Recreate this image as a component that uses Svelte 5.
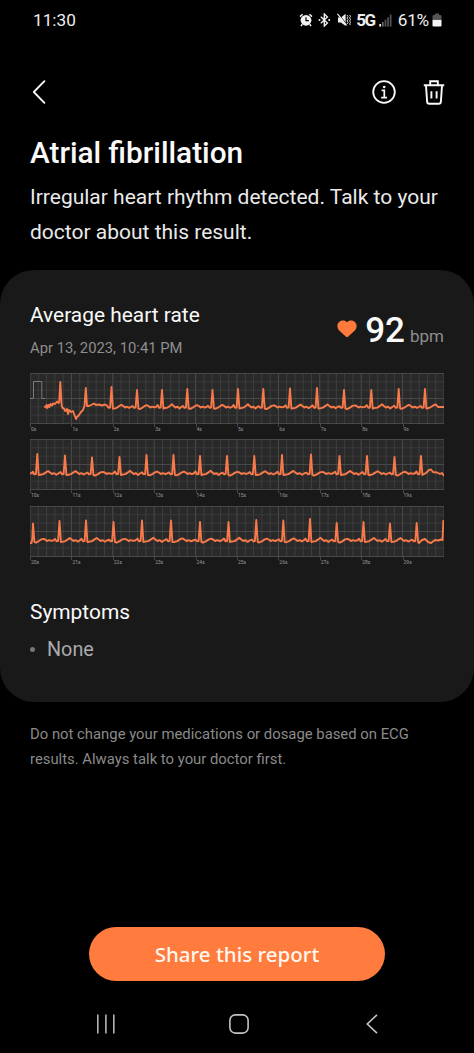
<script lang="ts">
  type Beat = [x: number, top: number];

  interface Strip {
    start: number;
    baseline: number;
    intro: string;
    beats: Beat[];
    tail: string;
  }

  const STRIP_WIDTH = 414;
  const STRIP_HEIGHT = 51;
  const SECOND = 41.4;

  const strips: Strip[] = [
    {
      start: 0,
      baseline: 34,
      intro: 'M14.5 33 L15.5 34.5 L16.5 32 L17.5 35 L18.5 32 L19.5 34 L20.5 31 L22 32.5 L23 30.5 L25 31 L27 28.5 L28.5 30 L29.2 29 L30.3 9 L31.6 32 L32.5 35 L34 35.5 L35 38 L37 36 L38 41 L39 37 L41 39 L43 38 L44.5 42 L46 46 L47 44 L49 42 L51 39 L53 37 L54.5 33 L55.8 15 L57 33 L59 33 L62 31.5 L64 30.5 L66 32 L69 31.5 L72 32.5 L75 31.5 L77 32.5',
      beats: [[81.5, 14], [107, 17], [132, 17], [157.3, 16], [182.5, 17], [208, 16], [233.3, 16], [260, 15.5], [287, 15], [314, 17], [341.3, 17], [368.7, 16], [395, 16]],
      tail: 'L399 35 L401 34 L404 32 L406 31.5 L408 34 L414 34'
    },
    {
      start: 10,
      baseline: 34.5,
      intro: 'M0 35 L2 33.5 L4 35',
      beats: [[7.3, 15], [35, 16.5], [62, 18.5], [89.5, 18], [116.5, 16], [143.5, 16], [170, 17], [197, 17], [224.3, 17], [252, 16], [281, 15.5], [309.5, 17], [337, 17], [364.5, 18], [391, 17]],
      tail: 'L396 34 L399 31 L401 30.5 L403 33 L407 33.5 L410 35 L412 34 L414 37'
    },
    {
      start: 20,
      baseline: 34.5,
      intro: 'M0 37 L1.5 37 L2.3 33',
      beats: [[3, 17.5], [29.5, 15], [56, 14.5], [83.5, 16], [112, 14.5], [141, 14.5], [170, 16], [198.5, 16], [226.3, 14], [253.3, 14.5], [280, 13], [306.7, 17], [333.5, 16], [360, 17.5], [386.7, 17]],
      tail: 'L389 37 L392 34 L395 33 L398 36 L401 37 L405 34 L408 34.5 L411 33.5 L412.5 34 L413.4 14'
    }
  ];

  // P wave, QRS spike and T wave for every beat; the offsets vary a little so the rhythm looks uneven
  function trace(strip: Strip): string {
    const base = strip.baseline;
    const parts = [strip.intro];
    strip.beats.forEach(([x, top], i) => {
      const wobble = Math.sin(i * 2.3 + strip.start) * 0.6;
      if (x > 6) {
        parts.push(`L${x - 4.5} ${base - 1.4 + wobble} L${x - 3} ${base + 0.8} L${x - 1.4} ${base + 0.6}`);
      }
      parts.push(`L${x} ${top} L${x + 1.4} ${base + 1.5}`);
      const next = strip.beats[i + 1];
      if (next) {
        const gap = next[0] - x;
        parts.push(
          `L${x + 3} ${base + 1.6 + wobble}`,
          `L${x + gap * 0.22} ${base + 0.6}`,
          `L${x + gap * 0.31} ${base - 1.1}`,
          `L${x + gap * 0.39} ${base - 2.2 + wobble}`,
          `L${x + gap * 0.46} ${base - 1}`,
          `L${x + gap * 0.53} ${base + 0.5}`,
          `L${x + gap * 0.61} ${base - 0.3}`,
          `L${x + gap * 0.69} ${base + 0.9 - wobble}`,
          `L${x + gap * 0.76} ${base}`
        );
      }
    });
    parts.push(strip.tail);
    return parts.join(' ');
  }

  const columns = Array.from({ length: 51 }, (_, i) => (i * SECOND) / 5);
  const rows = Array.from({ length: 7 }, (_, i) => 0.5 + i * 8.33);
  const seconds = Array.from({ length: 10 }, (_, i) => i);
</script>

<div class="screen">
  <header class="status-bar">
    <span class="clock">11:30</span>
    <div class="status-icons">
      <svg class="alarm" viewBox="0 0 14 14" width="14" height="14">
        <circle cx="7" cy="7.3" r="5.4" fill="#f2f2f2" />
        <path d="M1 3.6 3.6 1.2M13 3.6 10.4 1.2M3.3 11.2 2 13M10.7 11.2 12 13" stroke="#f2f2f2" stroke-width="1.5" fill="none" />
        <path d="M7 4.2V7.6H9.8" stroke="#000" stroke-width="1.2" fill="none" />
      </svg>
      <svg class="bluetooth" viewBox="0 0 13 14" width="13" height="14">
        <path d="M2.8 3.8 9.4 9.9 6.3 13V1L9.4 4.1 2.8 10.2" fill="none" stroke="#eee" stroke-width="1.4" />
        <circle cx="1.5" cy="7" r="1" fill="#eee" />
        <circle cx="11.2" cy="7" r="1" fill="#eee" />
      </svg>
      <svg class="mute" viewBox="0 0 14 14" width="14" height="14">
        <path d="M1 4.5H4L8.6 0.8V13L4 9.5H1Z" fill="#eee" />
        <path d="M1.3 0.9 10.3 12" stroke="#000" stroke-width="1" />
        <path d="M0.5 0.9 9.6 12.4" stroke="#eee" stroke-width="1.2" />
        <path d="M10 2 11 3.5 10 5 11 6.5 10 8 11 9.5 10 11M12.6 2 13.5 3.5 12.6 5 13.5 6.5 12.6 8 13.5 9.5 12.6 11 13.5 12" stroke="#ddd" stroke-width="1" fill="none" />
      </svg>
      <span class="network">5G</span>
      <svg class="signal" viewBox="0 0 13 13" width="13" height="13">
        <rect x="0.3" y="10" width="1.8" height="2.6" fill="#eee" />
        <rect x="3" y="8" width="1.7" height="4.6" fill="#666" />
        <rect x="5.6" y="5.6" width="1.7" height="7" fill="#555" />
        <rect x="8.2" y="3.2" width="1.7" height="9.4" fill="#555" />
        <rect x="10.8" y="0.6" width="1.7" height="12" fill="#555" />
      </svg>
      <span class="percent">61%</span>
      <svg class="battery" viewBox="0 0 10 14" width="10" height="14">
        <path d="M3 0.5H7V2H8.3Q9.5 2 9.5 3.2V6.5H0.5V3.2Q0.5 2 1.7 2H3Z" fill="#555" />
        <path d="M0.5 6.8H9.5V12.3Q9.5 13.5 8.3 13.5H1.7Q0.5 13.5 0.5 12.3Z" fill="#f5f5f5" />
      </svg>
    </div>
  </header>

  <nav class="toolbar">
    <button class="icon-button" aria-label="Back">
      <svg viewBox="0 0 14 24" width="14" height="24">
        <path d="M12.4 1.2 1.8 12 12.4 22.8" fill="none" stroke="#fafafa" stroke-width="1.8" stroke-linecap="round" stroke-linejoin="round" />
      </svg>
    </button>
    <div class="toolbar-actions">
      <button class="icon-button" aria-label="Information">
        <svg viewBox="0 0 24 24" width="24" height="24">
          <circle cx="12" cy="12" r="10.8" fill="none" stroke="#fafafa" stroke-width="1.8" />
          <circle cx="12.2" cy="7" r="1.3" fill="#fafafa" />
          <path d="M9.6 10.3H12.3V17.6M9.2 17.7H15" fill="none" stroke="#fafafa" stroke-width="1.7" />
        </svg>
      </button>
      <button class="icon-button" aria-label="Delete">
        <svg viewBox="0 0 22 25" width="22" height="25">
          <path d="M0.8 5.3H21.2M7.2 5V1.3H14.8V5M3 5.6 4.1 21.6Q4.2 23.7 6.3 23.7H15.7Q17.8 23.7 17.9 21.6L19 5.6M8.4 11.2V18.4M13.6 11.2V18.4" fill="none" stroke="#fafafa" stroke-width="1.9" />
        </svg>
      </button>
    </div>
  </nav>

  <section class="result">
    <h1>Atrial fibrillation</h1>
    <p>Irregular heart rhythm detected. Talk to your<br />doctor about this result.</p>
  </section>

  <main class="card">
    <div class="summary">
      <div>
        <h2>Average heart rate</h2>
        <time>Apr 13, 2023, 10:41 PM</time>
      </div>
      <div class="rate">
        <svg class="heart" viewBox="0 0 20 18" width="20" height="18">
          <path d="M10 17.2Q9.4 17.2 8.7 16.6L2.2 10.4C-0.4 7.5 0 3.7 2.2 2C4.8-0.2 8.2 0.2 10 2.2C11.8 0.2 15.2-0.2 17.8 2C20 3.7 20.4 7.5 17.8 10.4L11.3 16.6Q10.6 17.2 10 17.2Z" fill="#ff7a3c" />
        </svg>
        <span class="bpm-value">92</span>
        <span class="bpm-unit">bpm</span>
      </div>
    </div>

    <div class="strips">
      {#each strips as strip (strip.start)}
        <div class="strip">
          <svg viewBox="0 0 {STRIP_WIDTH} {STRIP_HEIGHT}" width={STRIP_WIDTH} height={STRIP_HEIGHT}>
            <rect width={STRIP_WIDTH} height={STRIP_HEIGHT} fill="#292929" />
            {#each columns as x, i}
              <line x1={x} x2={x} y1="0" y2={STRIP_HEIGHT} stroke={i % 5 === 0 ? '#505050' : '#414141'} stroke-width="0.9" />
            {/each}
            {#each rows as y, i}
              <line x1="0" x2={STRIP_WIDTH} y1={y} y2={y} stroke={i % 3 === 0 ? '#4c4c4c' : '#3c3c3c'} stroke-width="0.9" />
            {/each}
            {#if strip.start === 0}
              <path d="M0 25.5H3.5V8.5H11.8V25.5H15" fill="none" stroke="#7a7a7a" stroke-width="1" />
            {/if}
            <path d={trace(strip)} fill="none" stroke="#f87a4a" stroke-width="1.9" stroke-linejoin="round" />
          </svg>
          <div class="ticks">
            {#each seconds as s}
              <span>{strip.start + s}s</span>
            {/each}
          </div>
        </div>
      {/each}
    </div>

    <h2 class="symptoms-title">Symptoms</h2>
    <ul>
      <li>None</li>
    </ul>
  </main>

  <p class="disclaimer">
    Do not change your medications or dosage based on ECG<br />results. Always talk to your doctor first.
  </p>

  <footer>
    <button class="share">Share this report</button>
    <div class="nav-bar">
      <svg viewBox="0 0 20 20" width="20" height="20">
        <path d="M1.8 0.5V19.5M9.9 0.5V19.5M17.8 0.5V19.5" stroke="#b4b4b4" stroke-width="1.6" />
      </svg>
      <svg viewBox="0 0 20 20" width="20" height="20">
        <rect x="0.9" y="0.9" width="18.2" height="18.2" rx="5.4" fill="none" stroke="#c4c4c4" stroke-width="1.6" />
      </svg>
      <svg viewBox="0 0 20 20" width="20" height="20">
        <path d="M15 0.8 5.3 10 15 19.2" fill="none" stroke="#c4c4c4" stroke-width="1.6" />
      </svg>
    </div>
  </footer>
</div>

<style>
  :global(body) {
    background: #000;
  }

  .screen {
    box-sizing: border-box;
    width: 474px;
    height: 1053px;
    display: flex;
    flex-direction: column;
    overflow: hidden;
    background: #000;
    color: #fafafa;
    font-family: Roboto, 'Liberation Sans', sans-serif;
  }

  h1,
  h2,
  p,
  ul {
    margin: 0;
    padding: 0;
    font-weight: 400;
  }

  button {
    border: 0;
    padding: 0;
    background: none;
    color: inherit;
  }

  svg {
    display: block;
    flex: none;
  }

  .status-bar {
    height: 40px;
    padding: 0 32px 0 33px;
    display: flex;
    align-items: center;
    justify-content: space-between;
    font-size: 17.2px;
    color: #eee;
  }

  .status-icons {
    display: flex;
    align-items: center;
  }

  .bluetooth {
    margin-left: 5px;
  }

  .mute {
    margin-left: 6px;
  }

  .network {
    margin-left: 5px;
    font-size: 17px;
    font-weight: 700;
    letter-spacing: -1.4px;
  }

  .signal {
    margin-left: 4px;
  }

  .percent {
    margin: 0 3px 0 6px;
    font-size: 17.2px;
    letter-spacing: -0.2px;
  }

  .toolbar {
    height: 104px;
    margin-bottom: -10px;
    padding: 0 29px 0 32px;
    display: flex;
    align-items: center;
    justify-content: space-between;
  }

  .toolbar-actions {
    display: flex;
    align-items: center;
    gap: 27px;
  }

  .result {
    height: 136px;
    padding: 0 30px;
  }

  h1 {
    font-size: 29.8px;
    font-weight: 500;
    line-height: 38px;
  }

  .result p {
    margin-top: 8px;
    font-size: 21px;
    line-height: 35px;
    color: #eaeaea;
  }

  .card {
    box-sizing: border-box;
    height: 432px;
    padding: 30px 30px 0;
    border-radius: 34px;
    background: #191919;
  }

  .summary {
    height: 73px;
    display: flex;
    justify-content: space-between;
  }

  h2 {
    font-size: 20.9px;
    line-height: 30px;
  }

  time {
    display: block;
    margin-top: 6px;
    font-size: 14.8px;
    line-height: 24px;
    color: #8e8e8e;
  }

  .rate {
    height: 58px;
    display: flex;
    align-items: baseline;
  }

  .heart {
    align-self: center;
    margin-right: 8px;
  }

  .bpm-value {
    font-size: 35px;
    font-weight: 500;
    line-height: 61px;
  }

  .bpm-unit {
    margin-left: 5px;
    font-size: 17px;
    color: #8e8e8e;
  }

  .strips {
    display: grid;
    grid-auto-rows: 66.3px;
  }

  .ticks {
    display: grid;
    grid-template-columns: repeat(10, 41.4px);
    font-size: 5px;
    line-height: 10px;
    color: #999;
  }

  .ticks span {
    height: 3px;
    border-left: 1px solid #444;
  }

  .symptoms-title {
    margin-top: 25px;
  }

  li {
    margin-top: 8px;
    display: flex;
    align-items: center;
    font-size: 19.8px;
    line-height: 30px;
    color: #aaa;
  }

  li::before {
    content: '';
    width: 5px;
    height: 5px;
    margin-right: 12px;
    border-radius: 50%;
    background: #777;
  }

  .disclaimer {
    padding: 20px 30px 0;
    font-size: 14.85px;
    line-height: 25px;
    color: #8a8a8a;
  }

  footer {
    margin-top: auto;
    display: flex;
    flex-direction: column;
    align-items: center;
  }

  .share {
    width: 296px;
    height: 54px;
    border-radius: 27px;
    background: #ff7b3e;
    color: #fff8ee;
    font: 500 20.5px 'Noto Sans', 'Open Sans', sans-serif;
  }

  .nav-bar {
    box-sizing: border-box;
    width: 290px;
    height: 72px;
    padding: 14px 0 0 4px;
    display: flex;
    align-items: center;
    justify-content: space-between;
  }
</style>
